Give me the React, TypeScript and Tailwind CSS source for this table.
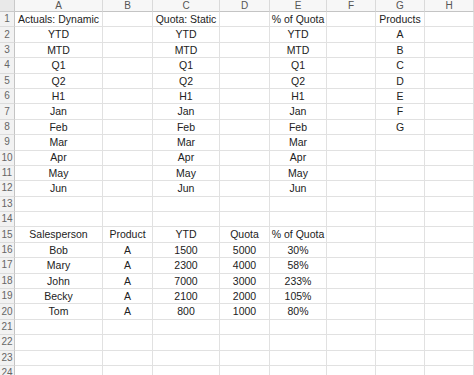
import React from "react";

const cols = ["A", "B", "C", "D", "E", "F", "G", "H"];
const periods = ["YTD", "MTD", "Q1", "Q2", "H1", "Jan", "Feb", "Mar", "Apr", "May", "Jun"];
const products = ["A", "B", "C", "D", "E", "F", "G"];

function buildData(): Record<number, Record<string, string>> {
  const d: Record<number, Record<string, string>> = {};
  d[1] = { A: "Actuals: Dynamic", C: "Quota: Static", E: "% of Quota", G: "Products" };
  periods.forEach((p, i) => {
    const r = i + 2;
    d[r] = { A: p, C: p, E: p };
    if (i < products.length) d[r].G = products[i];
  });
  d[15] = { A: "Salesperson", B: "Product", C: "YTD", D: "Quota", E: "% of Quota" };
  const rows = [
    ["Bob", "A", "1500", "5000", "30%"],
    ["Mary", "A", "2300", "4000", "58%"],
    ["John", "A", "7000", "3000", "233%"],
    ["Becky", "A", "2100", "2000", "105%"],
    ["Tom", "A", "800", "1000", "80%"],
  ];
  rows.forEach((r, i) => {
    d[16 + i] = { A: r[0], B: r[1], C: r[2], D: r[3], E: r[4] };
  });
  return d;
}

const data = buildData();
const rowNums = Array.from({ length: 24 }, (_, i) => i + 1);

export default function App() {
  return (
    <div
      className="w-[474px] h-[375px] overflow-hidden bg-white"
      style={{ fontFamily: '"Liberation Sans", Arial, sans-serif' }}
    >
      <div className="grid grid-cols-[15px_88px_50px_67px_50px_57px_49px_49px_49px] auto-rows-[15.4px] grid-rows-[12px]">
        <div className="bg-[#e9e9e9] border-r border-b border-[#c9c9c9]" />
        {cols.map((c) => (
          <div
            key={c}
            className="bg-[#f7f7f7] border-r border-b border-r-[#dadada] border-b-[#c4c4c4] flex items-center justify-center text-[10px] leading-none text-[#555]"
          >
            {c}
          </div>
        ))}
        {rowNums.map((r) => (
          <React.Fragment key={r}>
            <div className="bg-[#f2f2f2] border-r border-b border-r-[#c4c4c4] border-b-[#dcdcdc] flex items-center justify-center text-[10px] leading-none text-[#666]">
              {r}
            </div>
            {cols.map((c) => (
              <div
                key={c}
                className="border-r border-b border-[#e1e1e1] flex items-center justify-center text-[10.5px] leading-none text-[#222] whitespace-nowrap"
              >
                {data[r]?.[c] ?? ""}
              </div>
            ))}
          </React.Fragment>
        ))}
      </div>
    </div>
  );
}
